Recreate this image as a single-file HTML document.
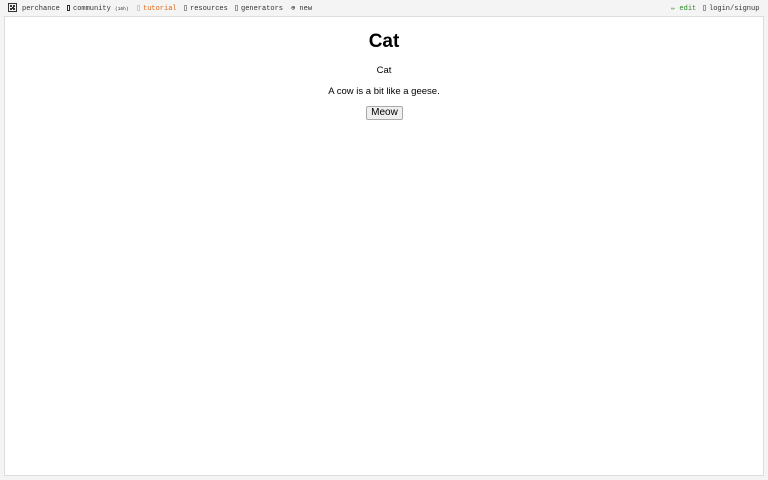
<!DOCTYPE html>
<html><head><meta charset="utf-8"><style>
html,body{margin:0;padding:0;width:768px;height:480px;background:#f4f4f4;overflow:hidden}
#bar{position:absolute;left:0;top:0;width:768px;height:16px;font-family:"Liberation Mono",monospace;font-size:7px;color:#333}
.it{position:absolute;top:5px;white-space:nowrap;line-height:9px}
.ic{display:inline-block;width:3px;height:6px;border:1px solid #999;vertical-align:-1px;margin-right:3px;box-sizing:border-box}
#frame{position:absolute;left:4px;top:16px;width:758px;height:458px;background:#fff;border:1px solid #ddd}
#c{position:absolute;left:0;top:0;width:768px;text-align:center;font-family:"Liberation Sans",sans-serif;color:#000}
h1{position:absolute;left:0;width:768px;top:31px;margin:0;font-size:19px;line-height:22px;font-weight:bold}
.p{position:absolute;left:0;width:768px;font-size:9.5px;line-height:12px}
button{position:absolute;left:366px;top:105px;width:37px;height:14px;font-family:"Liberation Sans",sans-serif;font-size:10px;padding:0;background:#efefef;border:1px solid #aaa;border-radius:2px;line-height:12px}
</style></head><body>
<div id="bar">
<div style="position:absolute;left:8px;top:3px;width:9px;height:9px;border:1px solid #333;box-sizing:border-box"><i style="position:absolute;left:1px;top:1px;width:2px;height:2px;background:#333"></i><i style="position:absolute;right:1px;top:1px;width:2px;height:2px;background:#333"></i><i style="position:absolute;left:2.5px;top:2.5px;width:2px;height:2px;background:#333"></i><i style="position:absolute;left:1px;bottom:1px;width:2px;height:2px;background:#333"></i><i style="position:absolute;right:1px;bottom:1px;width:2px;height:2px;background:#333"></i></div>
<div class="it" style="left:22px">perchance</div>
<div class="it" style="left:67px"><i class="ic" style="border-color:#333"></i>community <small style="font-size:4.5px">(16h)</small></div>
<div class="it" style="left:137px;color:#e06a1a"><i class="ic" style="border-color:#f2c3a0"></i>tutorial</div>
<div class="it" style="left:184px"><i class="ic"></i>resources</div>
<div class="it" style="left:235px"><i class="ic"></i>generators</div>
<div class="it" style="left:291px">⊕ new</div>
<div class="it" style="left:671px;color:#2a8a2a">✏ edit</div>
<div class="it" style="left:703px"><i class="ic"></i>login/signup</div>
</div>
<div id="frame"></div>
<div id="c">
<h1>Cat</h1>
<div class="p" style="top:65px">Cat</div>
<div class="p" style="top:86px">A cow is a bit like a geese.</div>
<button style="top:106px">Meow</button>
</div>
</body></html>
